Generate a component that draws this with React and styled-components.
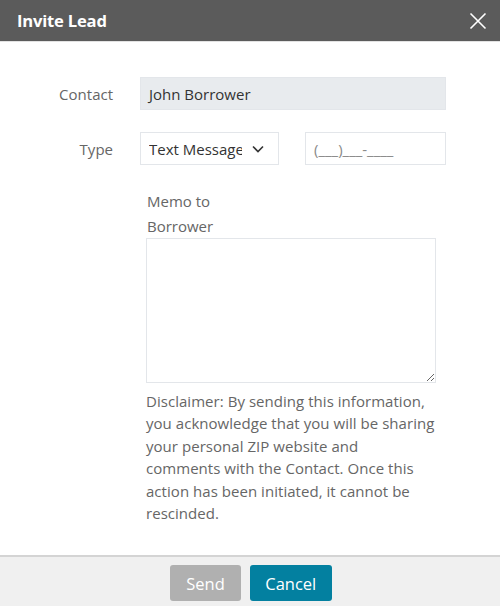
import React from "react";
import styled, { createGlobalStyle } from "styled-components";

const Global = createGlobalStyle`
  html, body { margin: 0; padding: 0; background: #fff; }
  body { font-family: "Open Sans", "Liberation Sans", sans-serif; }
  * { box-sizing: border-box; }
`;

const Dialog = styled.div`
  width: 500px;
  height: 606px;
  display: flex;
  flex-direction: column;
  background: #fff;
`;

const Header = styled.div`
  height: 42px;
  background: #5b5b5b;
  display: flex;
  align-items: center;
  justify-content: space-between;
  padding: 0 13px 0 17px;
  border-bottom: 1px solid #e2e2e2;
`;

const Title = styled.h1`
  margin: 0;
  font-size: 16.6px;
  font-weight: 700;
  color: #fff;
  letter-spacing: -0.2px;
`;

const Close = styled.button`
  border: 0;
  background: none;
  padding: 0;
  width: 18px;
  height: 18px;
  display: flex;
  cursor: pointer;
`;

const Body = styled.div`
  flex: 1;
  padding: 35px 54px 0 0;
  display: flex;
  flex-direction: column;
`;

const Row = styled.div`
  display: grid;
  grid-template-columns: 113px 1fr;
  column-gap: 27px;
  align-items: center;
  margin-bottom: ${(p) => p.$gap || 0}px;
`;

const Label = styled.label`
  font-size: 15px;
  color: #666;
  text-align: right;
`;

const TextInput = styled.div`
  height: ${(p) => p.$h || 33}px;
  display: flex;
  align-items: center;
  padding: 0 8px;
  font-size: 15px;
  color: ${(p) => (p.$placeholder ? "#8a8a8a" : "#333")};
  background: ${(p) => (p.$filled ? "#e8ebee" : "#fff")};
  border: 1px solid #e3e6ea;
  flex: ${(p) => (p.$grow ? 1 : "none")};
`;

const Fields = styled.div`
  display: flex;
  gap: 26px;
`;

const Select = styled.div`
  width: 139px;
  height: 33px;
  display: flex;
  align-items: center;
  padding: 0 0 0 8px;
  border: 1px solid #e3e6ea;
  font-size: 15px;
  color: #333;
`;

const SelectText = styled.span`
  width: 93px;
  overflow: hidden;
  white-space: nowrap;
`;

const Chevron = styled.svg`
  margin-left: 10px;
`;

const Memo = styled.div`
  margin: 24px 0 0 146px;
  width: 290px;
  display: flex;
  flex-direction: column;
`;

const MemoLabel = styled.div`
  font-size: 15px;
  line-height: 24.5px;
  color: #666;
  padding-left: 1px;
`;

const TextArea = styled.textarea`
  width: 290px;
  height: 145px;
  resize: vertical;
  border: 1px solid #e3e6ea;
  font-family: inherit;
  font-size: 15px;
  margin: 0;
`;

const Disclaimer = styled.p`
  margin: 7px 0 0;
  font-size: 15px;
  line-height: 22.4px;
  letter-spacing: 0.04px;
  color: #666;
`;

const Footer = styled.div`
  height: 51px;
  background: #f0f0f0;
  border-top: 2px solid #d4d4d4;
  display: flex;
  justify-content: center;
  align-items: flex-start;
  gap: 9px;
  padding: 8px 0 0 2px;
`;

const Button = styled.button`
  height: 36px;
  padding: 0 ${(p) => p.$px}px;
  border: 0;
  border-radius: 3px;
  font-family: inherit;
  font-size: 16.5px;
  color: #fff;
  background: ${(p) => (p.$primary ? "#0380a0" : "#b0b0b0")};
`;

export default function App() {
  return (
    <Dialog>
      <Global />
      <Header>
        <Title>Invite Lead</Title>
        <Close aria-label="Close">
          <svg width="18" height="18" viewBox="0 0 18 18">
            <path d="M1.5 1.5 L16.5 16.5 M16.5 1.5 L1.5 16.5" stroke="#fff" strokeWidth="1.6" />
          </svg>
        </Close>
      </Header>
      <Body>
        <Row $gap={22}>
          <Label>Contact</Label>
          <TextInput $filled>John Borrower</TextInput>
        </Row>
        <Row>
          <Label>Type</Label>
          <Fields>
            <Select>
              <SelectText>Text Message</SelectText>
              <Chevron width="12" height="8" viewBox="0 0 12 8">
                <path d="M1 1.5 L6 6.5 L11 1.5" fill="none" stroke="#333" strokeWidth="1.6" />
              </Chevron>
            </Select>
            <TextInput $grow $placeholder>(___)___-____</TextInput>
          </Fields>
        </Row>
        <Memo>
          <MemoLabel>
            Memo to
            <br />
            Borrower
          </MemoLabel>
          <TextArea />
          <Disclaimer>
            Disclaimer: By sending this information, you acknowledge that you will be sharing
            your personal ZIP website and comments with the Contact. Once this action has been
            initiated, it cannot be rescinded.
          </Disclaimer>
        </Memo>
      </Body>
      <Footer>
        <Button $px={16}>Send</Button>
        <Button $primary $px={15.5}>Cancel</Button>
      </Footer>
    </Dialog>
  );
}
